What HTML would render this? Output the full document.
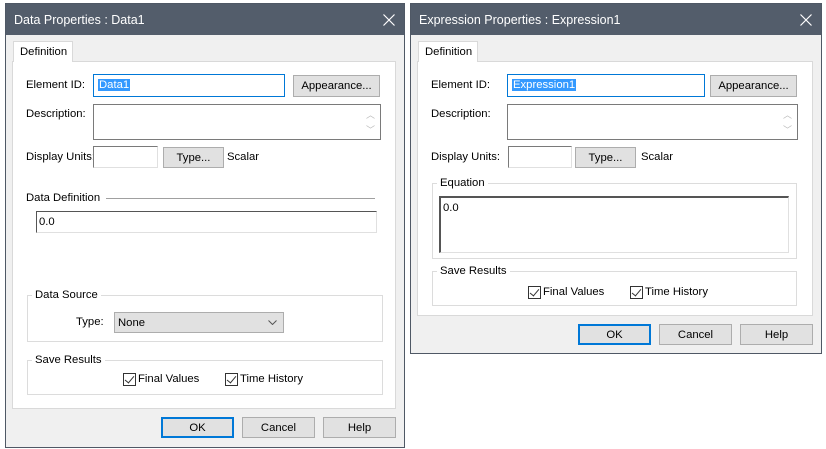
<!DOCTYPE html><html><head><style>
body{margin:0;width:826px;height:449px;background:#fff;position:relative;font-family:"Liberation Sans",sans-serif;font-size:11.3px;color:#000;overflow:hidden}
div,span{position:absolute;box-sizing:border-box}
.win{background:#f0f0f0;border:1px solid #4f5865}
.tb{left:0;top:0;right:0;height:31px;background:#535d6b;color:#fff;font-size:12.5px;padding:9px 0 0 8px}
.x{right:9px;top:9px}
.tab{background:#fff;border:1px solid #d9d9d9;border-bottom:none;height:21px;padding:4px 0 0 6px}
.panel{background:#fff;border:1px solid #d9d9d9}
.inp{background:#fff;border:1px solid #7a7a7a}
.foc{background:#fff;border:1px solid #0078d7}
.btn{background:#e1e1e1;border:1px solid #adadad;text-align:center;padding-top:4px}
.ok{border:2px solid #0078d7;padding-top:3px}
.grp{border:1px solid #dcdcdc}
.gl{background:#fff;padding:0 3px}
.sel{background:#3399ff;color:#fff;padding:0 1px}
.cb{width:13px;height:13px;border:1px solid #333;background:#fff}
.cb::after{content:"";position:absolute;left:3px;top:0px;width:4px;height:8px;border:solid #333;border-width:0 1px 1px 0;transform:rotate(40deg)}
.sc{color:#bbb;font-size:9px}
</style></head><body>
<div class="win" style="left:5px;top:3px;width:400px;height:445px">
<div class="tb">Data Properties : Data1</div><svg class="x" style="position:absolute;right:9px;top:10px" width="12" height="12"><path d="M0.5 0.5L11.5 11.5M11.5 0.5L0.5 11.5" stroke="#fff" stroke-width="1.2"/></svg>
</div>
<div class="panel" style="left:12px;top:61px;width:384px;height:348px"></div>
<div class="tab" style="left:13px;top:41px;width:60px">Definition</div>
<div style="left:26px;top:79px">Element ID:</div>
<div class="foc" style="left:93px;top:74px;width:192px;height:23px;padding:4px 4px"><span class="sel" style="position:static">Data1</span></div>
<div class="btn" style="left:293px;top:75px;width:87px;height:22px">Appearance...</div>
<div style="left:26px;top:108px">Description:</div>
<div class="inp" style="left:93px;top:104px;width:288px;height:36px"><span class="sc" style="right:5px;top:3px">︿</span><span class="sc" style="right:5px;top:18px">﹀</span></div>
<div style="left:26px;top:151px">Display Units:</div>
<div class="inp" style="left:93px;top:146px;width:65px;height:22px;border-color:#7a7a7a #e0e0e0 #e0e0e0 #7a7a7a"></div>
<div class="btn" style="left:163px;top:147px;width:61px;height:21px">Type...</div>
<div style="left:227px;top:151px">Scalar</div>
<div style="left:26px;top:192px">Data Definition</div>
<div style="left:106px;top:198px;width:269px;height:1px;background:#a0a0a0"></div>
<div class="inp" style="left:36px;top:211px;width:341px;height:22px;padding:4px 2px;border-color:#555 #e0e0e0 #e0e0e0 #555">0.0</div>
<div class="grp" style="left:27px;top:295px;width:356px;height:47px"></div>
<div class="gl" style="left:32px;top:289px">Data Source</div>
<div style="left:76px;top:316px">Type:</div>
<div class="btn" style="left:114px;top:312px;width:170px;height:21px;text-align:left;padding:4px 3px">None<svg style="position:absolute;right:6px;top:7px" width="9" height="5"><path d="M0.5 0.5L4.5 4.5L8.5 0.5" stroke="#555" fill="none"/></svg></div>
<div class="grp" style="left:27px;top:360px;width:356px;height:35px"></div>
<div class="gl" style="left:32px;top:354px">Save Results</div>
<div class="cb" style="left:123px;top:373px"></div><div style="left:138px;top:373px">Final Values</div>
<div class="cb" style="left:225px;top:373px"></div><div style="left:240px;top:373px">Time History</div>
<div class="btn ok" style="left:161px;top:417px;width:73px;height:21px">OK</div>
<div class="btn" style="left:242px;top:417px;width:73px;height:21px">Cancel</div>
<div class="btn" style="left:323px;top:417px;width:73px;height:21px">Help</div>
<div class="win" style="left:410px;top:3px;width:412px;height:351px">
<div class="tb">Expression Properties : Expression1</div><svg style="position:absolute;right:9px;top:10px" width="12" height="12"><path d="M0.5 0.5L11.5 11.5M11.5 0.5L0.5 11.5" stroke="#fff" stroke-width="1.2"/></svg>
</div>
<div class="panel" style="left:417px;top:61px;width:396px;height:255px"></div>
<div class="tab" style="left:418px;top:41px;width:60px">Definition</div>
<div style="left:431px;top:79px">Element ID:</div>
<div class="foc" style="left:507px;top:74px;width:198px;height:23px;padding:4px 4px"><span class="sel" style="position:static">Expression1</span></div>
<div class="btn" style="left:710px;top:75px;width:87px;height:22px">Appearance...</div>
<div style="left:431px;top:108px">Description:</div>
<div class="inp" style="left:507px;top:104px;width:291px;height:36px"><span class="sc" style="right:5px;top:3px">︿</span><span class="sc" style="right:5px;top:18px">﹀</span></div>
<div style="left:431px;top:151px">Display Units:</div>
<div class="inp" style="left:508px;top:146px;width:64px;height:22px;border-color:#7a7a7a #e0e0e0 #e0e0e0 #7a7a7a"></div>
<div class="btn" style="left:575px;top:147px;width:61px;height:21px">Type...</div>
<div style="left:641px;top:151px">Scalar</div>
<div class="grp" style="left:432px;top:183px;width:365px;height:76px"></div>
<div class="gl" style="left:437px;top:177px">Equation</div>
<div class="inp" style="left:439px;top:196px;width:350px;height:57px;padding:4px 2px;border-color:#555 #e0e0e0 #e0e0e0 #555;border-width:2px 1px 1px 2px">0.0</div>
<div class="grp" style="left:432px;top:271px;width:365px;height:35px"></div>
<div class="gl" style="left:437px;top:265px">Save Results</div>
<div class="cb" style="left:528px;top:286px"></div><div style="left:543px;top:286px">Final Values</div>
<div class="cb" style="left:630px;top:286px"></div><div style="left:645px;top:286px">Time History</div>
<div class="btn ok" style="left:578px;top:324px;width:73px;height:21px">OK</div>
<div class="btn" style="left:659px;top:324px;width:73px;height:21px">Cancel</div>
<div class="btn" style="left:740px;top:324px;width:73px;height:21px">Help</div>
</body></html>
